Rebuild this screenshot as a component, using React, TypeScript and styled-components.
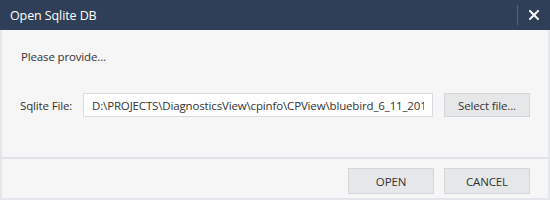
import styled, { createGlobalStyle } from "styled-components";

const GlobalStyle = createGlobalStyle`
  html, body {
    margin: 0;
    padding: 0;
    background: #f6f6f6;
  }

  body {
    font-family: "Open Sans", "Noto Sans", sans-serif;
    font-size: 11.5px;
    letter-spacing: -0.15px;
    color: #333;
  }
`;

const FILE_PATH =
  "D:\\PROJECTS\\DiagnosticsView\\cpinfo\\CPView\\bluebird_6_11_2018.sqlite";

export default function App() {
  return (
    <>
      <GlobalStyle />
      <Window>
        <TitleBar>
          <Title>Open Sqlite DB</Title>
          <CloseButton aria-label="Close">
            <svg width="10" height="10" viewBox="0 0 10 10">
              <path
                d="M1 1 L9 9 M9 1 L1 9"
                stroke="#fff"
                strokeWidth="2"
                strokeLinecap="square"
              />
            </svg>
          </CloseButton>
        </TitleBar>
        <Body>
          <Content>
            <Prompt>Please provide...</Prompt>
            <FieldRow>
              <Label>Sqlite File:</Label>
              <PathInput value={FILE_PATH} readOnly />
              <Button $width={86}>Select file...</Button>
            </FieldRow>
          </Content>
          <Footer>
            <Button $width={86} $height={26}>
              OPEN
            </Button>
            <Button $width={86} $height={26}>
              CANCEL
            </Button>
          </Footer>
        </Body>
      </Window>
    </>
  );
}

const Window = styled.div`
  width: 550px;
  height: 200px;
  display: flex;
  flex-direction: column;
  box-sizing: border-box;
`;

const TitleBar = styled.div`
  height: 30px;
  flex: none;
  background: #2e3f57;
  display: flex;
  align-items: center;
  justify-content: space-between;
  padding-left: 10px;
`;

const Title = styled.span`
  color: #ffffff;
  font-size: 12.5px;
  letter-spacing: -0.1px;
`;

const CloseButton = styled.div`
  width: 32px;
  height: 20px;
  border-left: 1px solid #56647a;
  display: flex;
  align-items: center;
  justify-content: center;
`;

const Body = styled.div`
  flex: 1;
  display: flex;
  flex-direction: column;
  border: 2px solid #e3e6ea;
  border-top: none;
  background: #f6f6f6;
`;

const Content = styled.div`
  flex: 1;
  padding: 19px 18px 0 18px;
  display: flex;
  flex-direction: column;
  gap: 28px;
`;

const Prompt = styled.div`
  line-height: 16px;
  padding-left: 1px;
`;

const FieldRow = styled.div`
  display: flex;
  align-items: center;
  height: 24px;
`;

const Label = styled.span`
  width: 63px;
  flex: none;
`;

const PathInput = styled.input`
  width: 350px;
  height: 24px;
  box-sizing: border-box;
  border: 1px solid #d9dbde;
  background: #ffffff;
  padding: 0 8px;
  font: inherit;
  letter-spacing: inherit;
  color: #333;
  outline: none;
  margin-right: 11px;
`;

const Button = styled.button<{ $width: number; $height?: number }>`
  width: ${(p) => p.$width}px;
  height: ${(p) => p.$height ?? 24}px;
  box-sizing: border-box;
  background: #e6e7e9;
  border: 1px solid #d2d5d9;
  font: inherit;
  letter-spacing: inherit;
  color: #333;
  padding: 0;
`;

const Footer = styled.div`
  flex: none;
  height: 41px;
  box-sizing: border-box;
  border-top: 2px solid #dfe3e7;
  padding: 9px 18px 6px 0;
  display: flex;
  justify-content: flex-end;
  align-items: flex-start;
  gap: 10px;
`;
